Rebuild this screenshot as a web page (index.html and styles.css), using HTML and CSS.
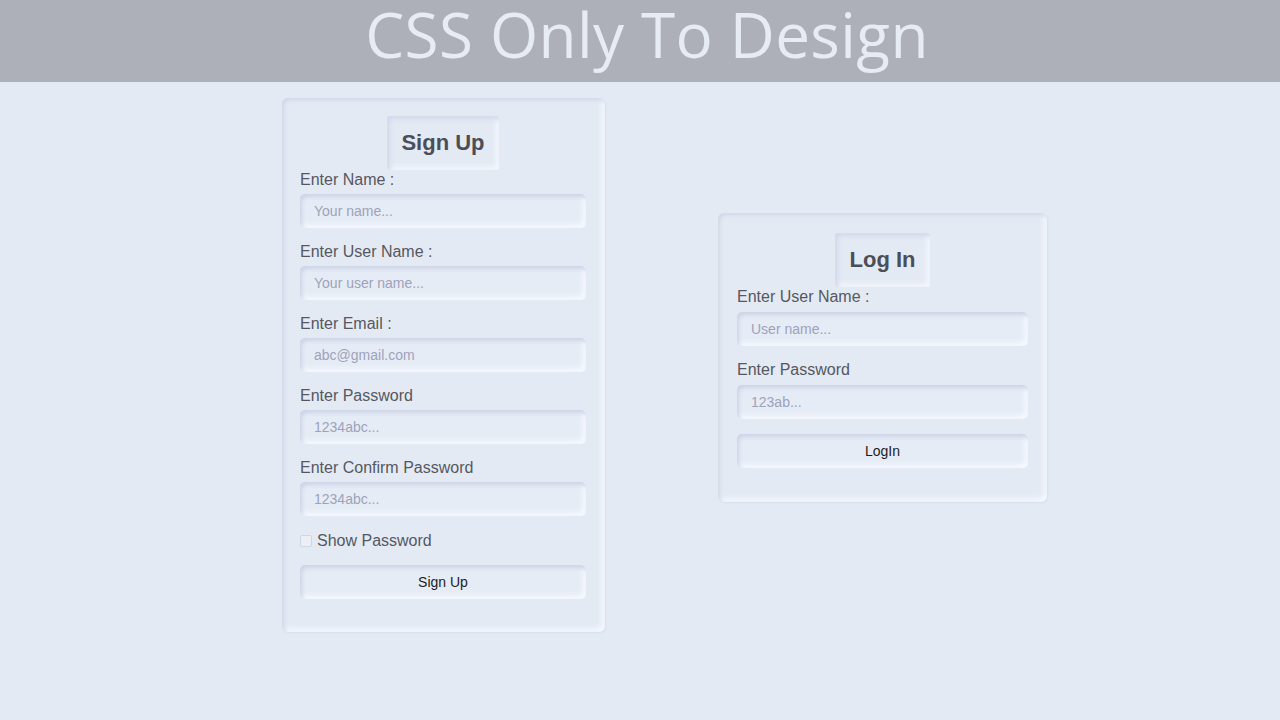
FILE: index.html
```html
<!DOCTYPE html>
<html>
<head>
<meta charset="utf-8">
<title>CSS Only To Design</title>
<link rel="stylesheet" href="styles.css">
</head>
<body>
<header class="topbar">
  <h1 class="title">CSS Only To Design</h1>
</header>
<main class="stage">
  <form class="card card-signup">
    <div class="head-wrap"><h2 class="card-title">Sign Up</h2></div>
    <label class="field-label">Enter Name :</label>
    <input class="field" type="text" placeholder="Your name...">
    <label class="field-label">Enter User Name :</label>
    <input class="field" type="text" placeholder="Your user name...">
    <label class="field-label">Enter Email :</label>
    <input class="field" type="text" placeholder="abc@gmail.com">
    <label class="field-label">Enter Password</label>
    <input class="field" type="password" placeholder="1234abc...">
    <label class="field-label">Enter Confirm Password</label>
    <input class="field" type="password" placeholder="1234abc...">
    <label class="check-row"><input class="check" type="checkbox">Show Password</label>
    <button class="btn" type="button">Sign Up</button>
  </form>
  <form class="card card-login">
    <div class="head-wrap"><h2 class="card-title">Log In</h2></div>
    <label class="field-label">Enter User Name :</label>
    <input class="field" type="text" placeholder="User name...">
    <label class="field-label">Enter Password</label>
    <input class="field" type="password" placeholder="123ab...">
    <button class="btn" type="button">LogIn</button>
  </form>
</main>
</body>
</html>
```

FILE: styles.css
```css
* { box-sizing: border-box; }
html, body {
  margin: 0;
  padding: 0;
  background: #e4eaf4;
  font-family: "Liberation Sans", Arial, sans-serif;
  height: 100%;
}
.topbar {
  height: 82px;
  background: #adb0b8;
  display: flex;
  justify-content: center;
  align-items: flex-start;
}
.title {
  margin: 0;
  padding-left: 14px;
  font-family: "Open Sans", "Noto Sans", sans-serif;
  font-weight: 400;
  font-size: 62px;
  line-height: 68px;
  color: #e6ebf4;
  letter-spacing: 0.4px;
}
.stage {
  display: flex;
  align-items: flex-start;
  padding-left: 282px;
  padding-top: 16px;
  gap: 113px;
}
.card {
  display: flex;
  flex-direction: column;
  border-radius: 6px;
  background: #e4eaf4;
  box-shadow: inset 2px 2px 4px #d0d6e6, inset -3px -3px 5px #f6f9ff, 1px 1px 2px #d8deeb;
}
.card-signup {
  width: 323px;
  padding: 18px 19px 33px 18px;
}
.card-login {
  width: 329px;
  margin-top: 115px;
  padding: 20px 19px 34px 19px;
}
.head-wrap {
  display: flex;
  justify-content: center;
}
.card-title {
  margin: 0;
  font-size: 22px;
  font-weight: 700;
  line-height: 54px;
  height: 54px;
  padding: 0 14px;
  color: #4b4e57;
  border-radius: 2px;
  box-shadow: inset 3px 3px 5px #d3d9ea, inset -3px -3px 5px #f4f7fd;
}
.card-login .card-title { padding: 0 15px; }
.field-label {
  display: block;
  font-size: 16px;
  line-height: 18px;
  color: #55585f;
  margin-top: 14px;
  margin-bottom: 6px;
  padding-top: 1px;
  height: 18px;
}
.head-wrap + .field-label { margin-top: 0; }
.card-login .field-label { margin-bottom: 7px; }
.field {
  display: block;
  width: 100%;
  height: 34px;
  border: none;
  outline: none;
  border-radius: 5px;
  background: #e6ecf6;
  padding: 0 14px;
  font-family: "Liberation Sans", Arial, sans-serif;
  font-size: 14px;
  color: #444;
  box-shadow: inset 2px 3px 4px #cdd3e6, inset -3px -3px 5px #f8faff;
}
.field::placeholder { color: #9ea2ba; }
.check-row {
  display: flex;
  align-items: center;
  font-size: 16px;
  line-height: 18px;
  color: #55585f;
  margin-top: 16px;
}
.check {
  appearance: none;
  -webkit-appearance: none;
  width: 12px;
  height: 12px;
  margin: 0 5px 0 0;
  border: 1px solid #d2d6de;
  border-radius: 2px;
  background: #eceff5;
}
.btn {
  display: block;
  width: 100%;
  height: 34px;
  margin-top: 15px;
  border: none;
  border-radius: 5px;
  background: #e6ecf6;
  font-family: "Liberation Sans", Arial, sans-serif;
  font-size: 14px;
  color: #1c1c1c;
  box-shadow: inset 2px 3px 4px #cdd3e6, inset -3px -3px 5px #f8faff;
}
```
